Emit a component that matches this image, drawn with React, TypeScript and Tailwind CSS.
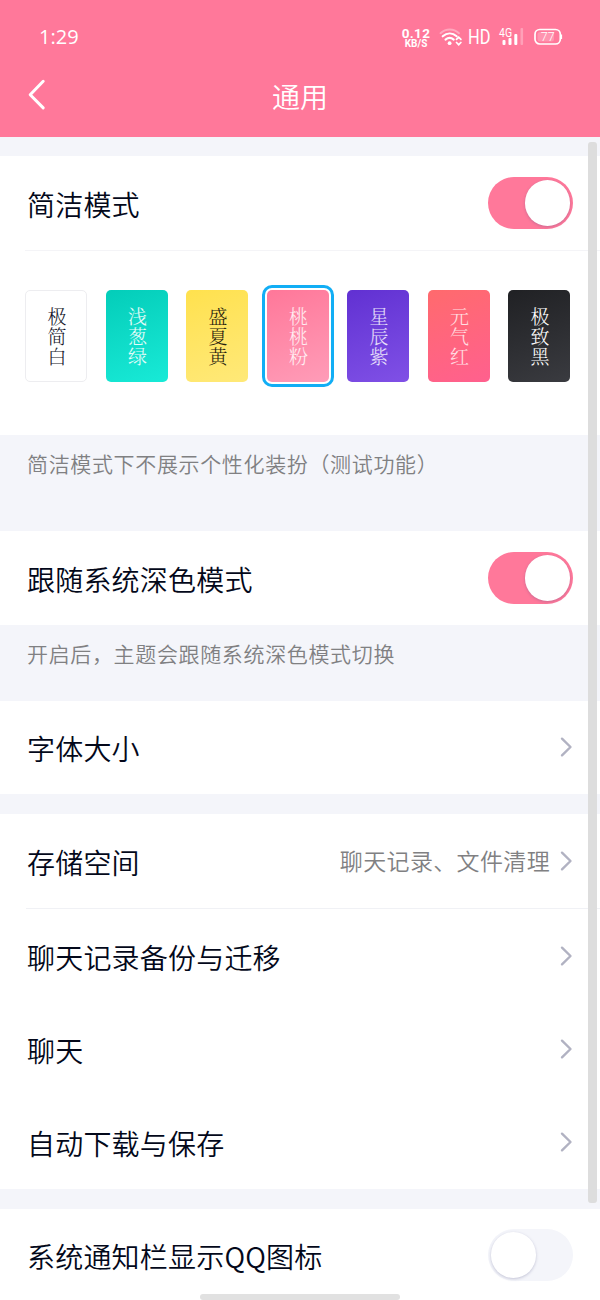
import type { ReactNode } from 'react';

type Swatch = { name: string; style: string; selected?: boolean };

const swatches: Swatch[] = [
  { name: '极简白', style: 'bg-white border border-[#ededf0] text-[#14152a]' },
  { name: '浅葱绿', style: 'bg-linear-160 from-[#03cdb9] to-[#18ead7] text-white/90' },
  { name: '盛夏黄', style: 'bg-linear-160 from-[#ffe14d] to-[#ffe978] text-[#26210d]' },
  { name: '桃桃粉', style: 'bg-linear-160 from-[#ff7799] to-[#ff9cb8] text-white/85', selected: true },
  { name: '星辰紫', style: 'bg-linear-160 from-[#6130d2] to-[#8050e6] text-white/85' },
  { name: '元气红', style: 'bg-linear-160 from-[#ff6a6d] to-[#ff608e] text-white/80' },
  { name: '极致黑', style: 'bg-linear-160 from-[#202124] to-[#3a3b40] text-white' },
];

function Chevron() {
  return (
    <svg className="mb-px ml-[10px] shrink-0" width="13" height="20" viewBox="0 0 13 20" fill="none" stroke="#b1b2c2" strokeWidth="2.4" strokeLinecap="round" strokeLinejoin="round">
      <path d="M2 1.7 10.5 10 2 18.3" />
    </svg>
  );
}

function Toggle({ on }: { on?: boolean }) {
  return (
    <div className={`flex h-[52px] w-[85px] shrink-0 items-center rounded-full px-[3px] ${on ? 'justify-end bg-[#ff789a]' : 'bg-[#f4f5fa]'}`}>
      <div className="h-[46px] w-[45px] rounded-full bg-white shadow-[0_1px_3px_rgba(80,80,130,0.3)]" />
    </div>
  );
}

function Row({ label, children, className = 'h-[94px]' }: { label: string; children: ReactNode; className?: string }) {
  return (
    <div className={`flex shrink-0 items-center bg-white pl-[27px] pr-[27px] ${className}`}>
      <span className="flex-1 whitespace-nowrap pt-px text-[28px] leading-[40px] tracking-[0.2px]">{label}</span>
      {children}
    </div>
  );
}

function Note({ children, className }: { children: ReactNode; className: string }) {
  return (
    <div className={`shrink-0 whitespace-nowrap pl-[27px] pt-[12px] text-[21px] leading-[32px] tracking-[0.65px] text-[#808082] ${className}`}>
      {children}
    </div>
  );
}

function StatusIcons() {
  return (
    <div className="flex items-center">
      <div className="flex w-[28px] flex-col items-center font-['Roboto'] font-bold">
        <span className="text-[13.5px] leading-[12px] tracking-[0.3px]">0.12</span>
        <span className="text-[10px] leading-[9px]">KB/S</span>
      </div>
      <svg className="ml-[9px]" width="23" height="20" viewBox="0 0 23 20" fill="none" stroke="white" strokeLinecap="round">
        <path d="M1.5 6.2C7 1.4 14.5 1.4 20 6.2" strokeWidth="2" opacity=".35" />
        <path d="M3.7 9.3c4.3-3.7 9.8-3.7 14 0M6.5 12.6c2.6-2.1 5.7-2.1 8.2 0" strokeWidth="2.1" />
        <circle cx="10.6" cy="16.2" r="1.9" fill="white" stroke="none" />
        <path d="m17.5 12.3 2.2-2.2 2.2 2.2M17.5 15.5l2.2 2.2 2.2-2.2" strokeWidth="1.7" />
      </svg>
      <svg className="ml-[6px] overflow-visible" width="24" height="26" viewBox="0 0 24 26" fill="white">
        <text x="0" y="19.7" fontFamily="Roboto" fontSize="19.5" textLength="22.5" lengthAdjust="spacingAndGlyphs">HD</text>
      </svg>
      <svg className="ml-[8px] overflow-visible" width="26" height="20" viewBox="0 0 26 20" fill="white">
        <text x="-1" y="10" fontFamily="Roboto" fontSize="12" textLength="13" lengthAdjust="spacingAndGlyphs">4G</text>
        <rect x="2.5" y="13" width="3" height="5" rx="1" />
        <rect x="8.5" y="11" width="3" height="7" rx="1" />
        <rect x="14.3" y="7" width="3" height="11" rx="1" />
        <rect x="20.5" y="1" width="2.6" height="17" rx="1" opacity=".3" />
      </svg>
      <svg className="ml-[8px]" width="29" height="18" viewBox="0 0 29 18">
        <rect x="1" y="1.5" width="25.3" height="14.5" rx="4.8" fill="none" stroke="white" strokeWidth="1.7" />
        <rect x="3.5" y="4" width="16.5" height="9.5" rx="2.5" fill="white" opacity=".22" />
        <path d="M27.3 6.5v4.5" stroke="white" strokeWidth="1.6" />
        <text x="13.7" y="13.2" fill="white" fontFamily="Roboto" fontWeight="300" fontSize="12.5" textAnchor="middle">77</text>
      </svg>
    </div>
  );
}

export default function App() {
  return (
    <div className="relative flex h-[1300px] w-[600px] flex-col overflow-hidden bg-[#f4f5fa] font-['Noto_Sans_CJK_SC',sans-serif] font-[350] text-[#03081a]">
      <header className="flex h-[137px] shrink-0 flex-col bg-[#ff789a] text-white">
        <div className="flex h-[58px] items-center justify-between pl-[39px] pr-[37px] pt-[16px] font-normal">
          <span className="font-['Open_Sans'] text-[20px] leading-[24px]">1:29</span>
          <StatusIcons />
        </div>
        <div className="grid h-[77px] grid-cols-[60px_1fr_60px] items-center">
          <svg className="mb-[3px] ml-[27px]" width="20" height="32" viewBox="0 0 20 32" fill="none" stroke="white" strokeWidth="3" strokeLinecap="round" strokeLinejoin="round">
            <path d="M16.2 2.3 3.2 15.7l13 13.2" />
          </svg>
          <h1 className="pb-[2px] text-center text-[28px] leading-[40px]">通用</h1>
        </div>
      </header>

      <Row label="简洁模式" className="mt-[19px] h-[94px]"><Toggle on /></Row>
      <section className="flex h-[185px] shrink-0 flex-col bg-white pl-[25.4px]">
        <div className="h-px bg-[#f4f4f7]" />
        <div className="flex gap-[18.5px] pt-[39px]">
          {swatches.map((s) => (
            <div
              key={s.name}
              className={`flex h-[92px] w-[62px] shrink-0 items-center justify-center rounded-[5px] font-['Noto_Serif_CJK_SC','Noto_Sans_CJK_SC',serif] ${s.style} ${s.selected ? 'outline-3 outline-offset-2 outline-[#12aef5]' : ''}`}
            >
              <span className="whitespace-nowrap pt-px text-[19px] leading-[24px] tracking-[1px] [writing-mode:vertical-rl]">{s.name}</span>
            </div>
          ))}
        </div>
      </section>
      <Note className="h-[96px]">简洁模式下不展示个性化装扮（测试功能）</Note>

      <Row label="跟随系统深色模式"><Toggle on /></Row>
      <Note className="h-[76px]">开启后，主题会跟随系统深色模式切换</Note>

      <Row label="字体大小" className="h-[93px]"><Chevron /></Row>

      <Row label="存储空间" className="mt-[20px] h-[94px]">
        <span className="-mt-[2px] whitespace-nowrap text-[23px] leading-[34px] tracking-[0.35px] text-[#808082]">聊天记录、文件清理</span>
        <Chevron />
      </Row>
      <div className="shrink-0 bg-white pl-[26px]"><div className="h-px bg-[#f0f1f5]" /></div>
      <Row label="聊天记录备份与迁移"><Chevron /></Row>
      <Row label="聊天" className="h-[93px]"><Chevron /></Row>
      <Row label="自动下载与保存" className="h-[93px]"><Chevron /></Row>

      <Row label="系统通知栏显示QQ图标" className="mt-[20px] h-[92px]"><Toggle /></Row>

      <div className="absolute left-[588px] top-[142px] h-[1061px] w-[9px] rounded-[3px] bg-[#dddddd]" />
      <div className="absolute bottom-0 left-[200px] h-[6px] w-[200px] rounded-full bg-[#e1e1e1]" />
    </div>
  );
}
